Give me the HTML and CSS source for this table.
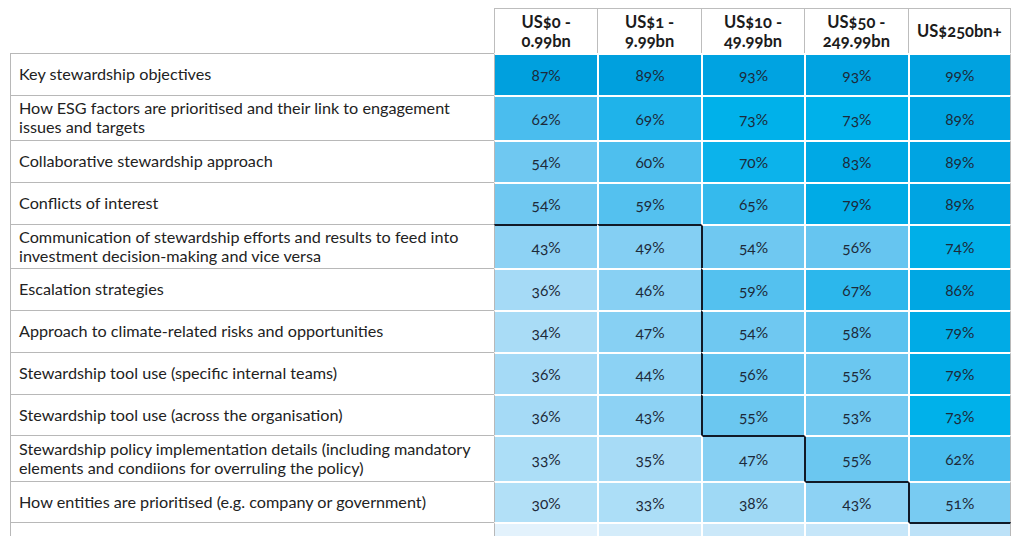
FILE: index.html
```html
<!DOCTYPE html>
<html>
<head>
<meta charset="utf-8">
<link rel="stylesheet" href="styles.css">
</head>
<body>
<div class="table">
  <div class="corner"></div>
  <div class="hcell">US$0 -<br>0.99bn</div>
  <div class="hcell">US$1 -<br>9.99bn</div>
  <div class="hcell">US$10 -<br>49.99bn</div>
  <div class="hcell">US$50 -<br>249.99bn</div>
  <div class="hcell last">US$250bn+</div>

  <div class="label first">Key stewardship objectives</div>
  <div class="cell c1" style="background:#00a0de">87%</div>
  <div class="cell" style="background:#00a0de">89%</div>
  <div class="cell" style="background:#00a3e1">93%</div>
  <div class="cell" style="background:#00a3e1">93%</div>
  <div class="cell c5" style="background:#00a2e0">99%</div>

  <div class="label">How ESG factors are prioritised and their link to engagement issues and targets</div>
  <div class="cell c1" style="background:#4abdee">62%</div>
  <div class="cell" style="background:#1fb3ea">69%</div>
  <div class="cell" style="background:#00b1ea">73%</div>
  <div class="cell" style="background:#00b1ea">73%</div>
  <div class="cell c5" style="background:#00a4e2">89%</div>

  <div class="label">Collaborative stewardship approach</div>
  <div class="cell c1" style="background:#6fc8f1">54%</div>
  <div class="cell" style="background:#4ebfee">60%</div>
  <div class="cell" style="background:#0cb3eb">70%</div>
  <div class="cell" style="background:#00a9e5">83%</div>
  <div class="cell c5" style="background:#00a4e2">89%</div>

  <div class="label">Conflicts of interest</div>
  <div class="cell c1" style="background:#6fc8f1">54%</div>
  <div class="cell" style="background:#54c1ef">59%</div>
  <div class="cell" style="background:#35baed">65%</div>
  <div class="cell" style="background:#00abe6">79%</div>
  <div class="cell c5" style="background:#00a4e2">89%</div>

  <div class="label">Communication of stewardship efforts and results to feed into investment decision-making and vice versa</div>
  <div class="cell c1 bt" style="background:#8dd2f4">43%</div>
  <div class="cell bt" style="background:#84cff3">49%</div>
  <div class="cell bl" style="background:#6fc8f1">54%</div>
  <div class="cell" style="background:#66c5f0">56%</div>
  <div class="cell c5" style="background:#00afe8">74%</div>

  <div class="label">Escalation strategies</div>
  <div class="cell c1" style="background:#a5daf6">36%</div>
  <div class="cell" style="background:#88d0f3">46%</div>
  <div class="cell bl" style="background:#54c1ef">59%</div>
  <div class="cell" style="background:#2cb7ec">67%</div>
  <div class="cell c5" style="background:#00a7e3">86%</div>

  <div class="label">Approach to climate-related risks and opportunities</div>
  <div class="cell c1" style="background:#a9dcf6">34%</div>
  <div class="cell" style="background:#87d0f3">47%</div>
  <div class="cell bl" style="background:#6fc8f1">54%</div>
  <div class="cell" style="background:#5ac2ef">58%</div>
  <div class="cell c5" style="background:#00abe6">79%</div>

  <div class="label">Stewardship tool use (specific internal teams)</div>
  <div class="cell c1" style="background:#a5daf6">36%</div>
  <div class="cell" style="background:#8cd2f4">44%</div>
  <div class="cell bl" style="background:#66c5f0">56%</div>
  <div class="cell" style="background:#6bc7f0">55%</div>
  <div class="cell c5" style="background:#00abe6">79%</div>

  <div class="label">Stewardship tool use (across the organisation)</div>
  <div class="cell c1" style="background:#a5daf6">36%</div>
  <div class="cell" style="background:#8dd2f4">43%</div>
  <div class="cell bl" style="background:#6bc7f0">55%</div>
  <div class="cell" style="background:#72c9f1">53%</div>
  <div class="cell c5" style="background:#00b1ea">73%</div>

  <div class="label">Stewardship policy implementation details (including mandatory elements and condiions for overruling the policy)</div>
  <div class="cell c1" style="background:#acdef7">33%</div>
  <div class="cell" style="background:#a7dbf6">35%</div>
  <div class="cell bt" style="background:#87d0f3">47%</div>
  <div class="cell bl" style="background:#6bc7f0">55%</div>
  <div class="cell c5" style="background:#4abdee">62%</div>

  <div class="label">How entities are prioritised (e.g. company or government)</div>
  <div class="cell c1" style="background:#b2e0f7">30%</div>
  <div class="cell" style="background:#acdef7">33%</div>
  <div class="cell" style="background:#9fd9f5">38%</div>
  <div class="cell bt" style="background:#8dd2f4">43%</div>
  <div class="cell c5 bl" style="background:#78cbf2">51%</div>

  <div class="label"></div>
  <div class="cell c1" style="background:#e3f2fc"></div>
  <div class="cell" style="background:#d4ecfa"></div>
  <div class="cell" style="background:#cbe8f9"></div>
  <div class="cell" style="background:#c6e6f9"></div>
  <div class="cell c5 bt" style="background:#bde2f8"></div>
</div>
</body>
</html>
```

FILE: styles.css
```css
html, body {
  margin: 0;
  padding: 0;
  background: #ffffff;
}

body {
  font-family: "Lato", "Open Sans", sans-serif;
  color: #222222;
  overflow: hidden;
}

.table {
  margin: 8px 0 0 10px;
  width: 1001px;
  display: grid;
  grid-template-columns: 484px repeat(5, 1fr);
  grid-template-rows: 45px 42px 45px 42px 42px 44px 42px 42px 42px 41px 46px 41px 40px;
}

.corner {
  background: transparent;
}

.hcell {
  border-top: 1px solid #bdbdbd;
  border-left: 1px solid #bdbdbd;
  display: flex;
  align-items: center;
  justify-content: center;
  text-align: center;
  font-weight: 700;
  font-size: 16.5px;
  line-height: 19px;
  color: #1b1b1b;
  font-variant-numeric: oldstyle-nums;
  padding-top: 1px;
}

.hcell.last {
  border-right: 1px solid #bdbdbd;
}

.label {
  border-top: 1px solid #b8b8b8;
  border-left: 1px solid #b8b8b8;
  padding: 0 12px 2px 8px;
  display: flex;
  align-items: center;
  font-size: 16.2px;
  line-height: 19px;
  color: #222222;
}

.cell {
  border-top: 2px solid #ffffff;
  border-left: 2px solid #ffffff;
  display: flex;
  align-items: center;
  justify-content: center;
  font-size: 15.5px;
  color: #1d2a3a;
  font-variant-numeric: oldstyle-nums;
}

.cell.c1 {
  border-left: 1px solid #b8b8b8;
}

.cell.c5 {
  border-right: 1px solid #b8b8b8;
}

.cell.bt {
  border-top-color: #111a27;
}

.cell.bl {
  border-left-color: #111a27;
}
```
